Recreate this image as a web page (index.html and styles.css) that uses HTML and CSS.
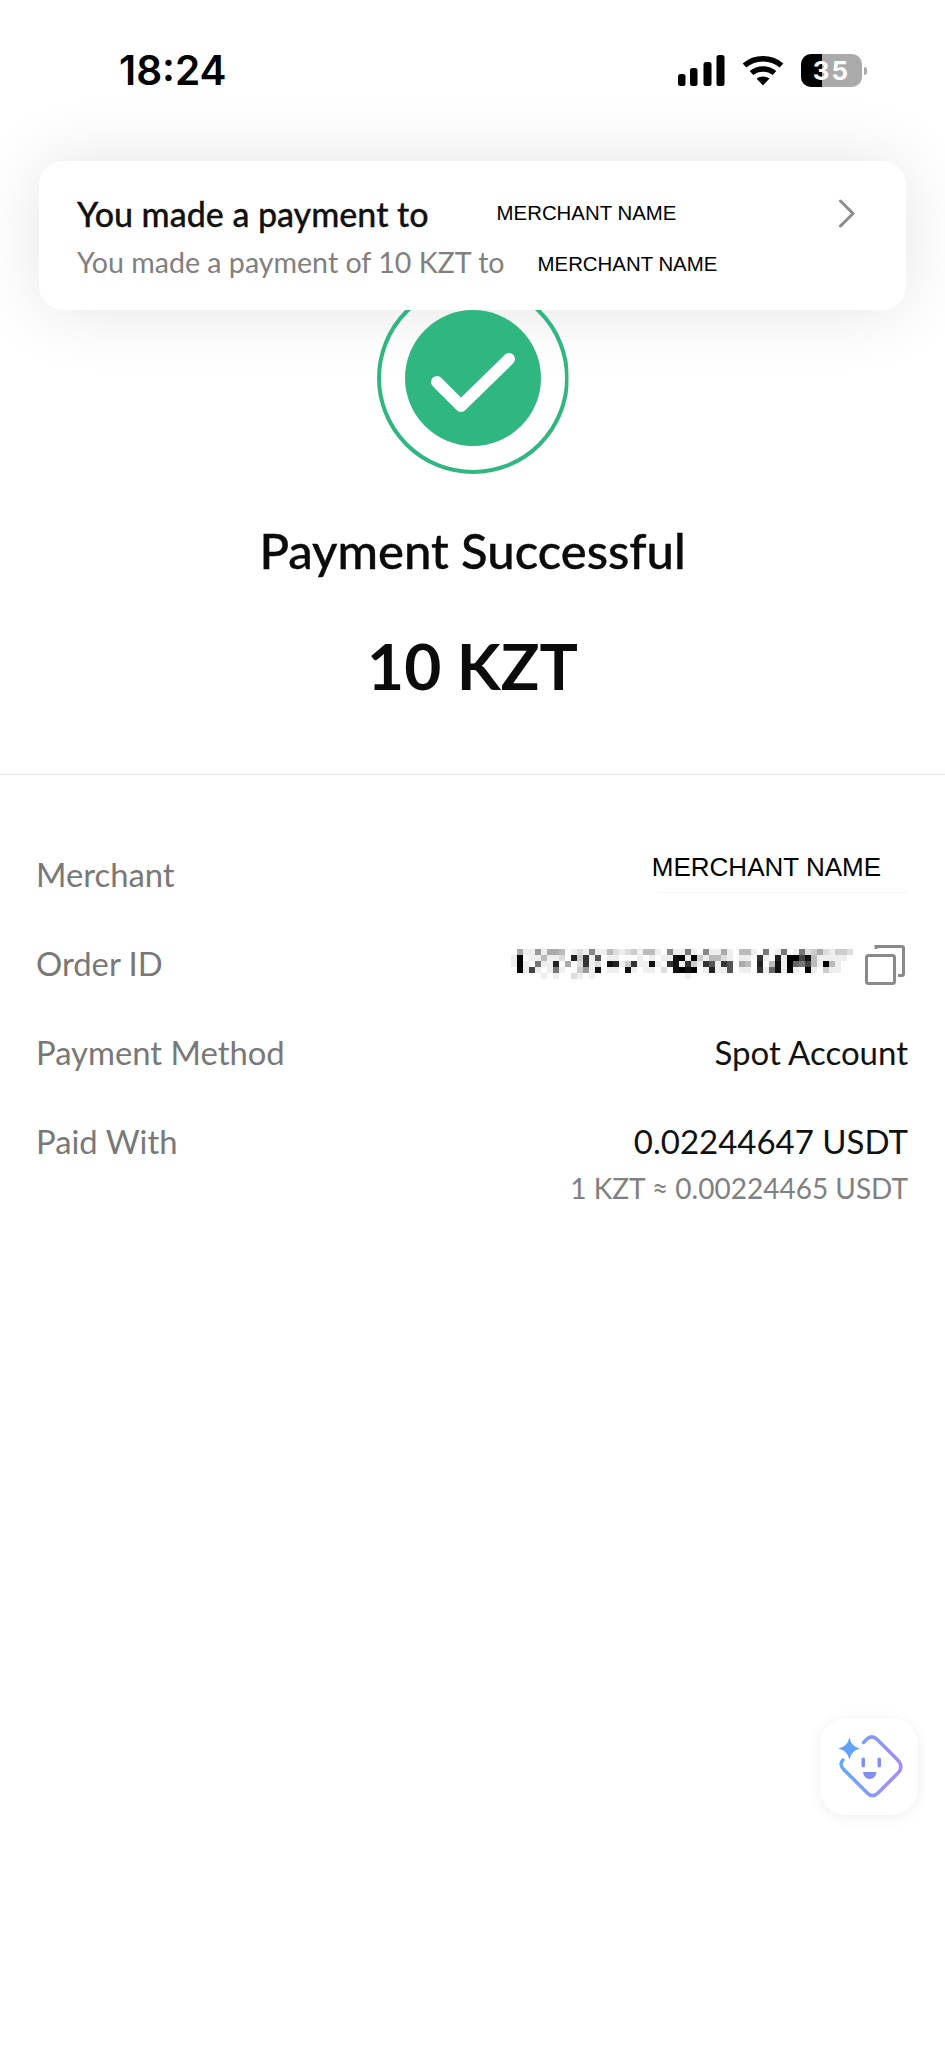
FILE: index.html
```html
<!DOCTYPE html>
<html>

<head>
  <title>Payment Successful</title>
  <link rel="stylesheet" href="styles.css">
  <script src="mosaic.js" defer></script>
</head>

<body>
  <div class="page">
    <div class="status-bar">
      <span class="status-time">18:24</span>
      <div class="status-icons">
        <svg class="signal" width="47" height="31" viewBox="0 0 47 31">
          <rect x="0" y="19" width="7.5" height="12" rx="2.5" />
          <rect x="12" y="13" width="7.5" height="18" rx="2.5" />
          <rect x="25.5" y="7" width="8" height="24" rx="2.5" />
          <rect x="38.5" y="0" width="8" height="31" rx="2.5" />
        </svg>
        <svg class="wifi" width="42" height="31" viewBox="0 0 42 31">
          <path d="M2.5 10.5C13 1.5 29 1.5 39.5 10.5" />
          <path d="M9.5 18C16 12.6 26 12.6 32.500 18" />
          <path class="wifi-dot" d="M14.5 23.500C18.300 20.700 23.700 20.700 27.500 23.500L21 30.500Z" />
        </svg>
        <div class="battery">
          <div class="battery-body">
            <div class="battery-level"></div>
            <span class="battery-text">35</span>
          </div>
          <div class="battery-nub"></div>
        </div>
      </div>
    </div>

    <div class="notice">
      <div class="notice-text">
        <div class="notice-line">
          <span class="notice-title">You made a payment to</span>
          <span class="merchant-small merchant-title">MERCHANT NAME</span>
        </div>
        <div class="notice-line">
          <span class="notice-sub">You made a payment of 10 KZT to</span>
          <span class="merchant-small merchant-sub">MERCHANT NAME</span>
        </div>
      </div>
      <svg class="notice-arrow" width="18" height="29" viewBox="0 0 18 29">
        <path d="M2.500 2L15 14.500L2.500 27" />
      </svg>
    </div>

    <div class="result">
      <div class="result-ring">
        <div class="result-disc">
          <svg class="result-check" width="90" height="66" viewBox="0 0 90 66">
            <path d="M9 33L33 57L81 10" />
          </svg>
        </div>
      </div>
      <h1 class="result-title">Payment Successful</h1>
      <div class="result-amount">10 KZT</div>
    </div>

    <div class="details">
      <div class="row">
        <span class="row-label">Merchant</span>
        <div class="row-merchant">
          <span class="merchant-big">MERCHANT NAME</span>
          <div class="merchant-trace"></div>
        </div>
      </div>
      <div class="row">
        <span class="row-label">Order ID</span>
        <div class="row-order">
          <div id="mosaic" class="mosaic"></div>
          <svg class="copy-icon" width="40" height="40" viewBox="0 0 40 40">
            <rect x="1.500" y="10.500" width="28" height="28" rx="2" />
            <path d="M11 4V1.500H37A1.500 1.500 0 0 1 38.500 3V29A1.500 1.500 0 0 1 37 30.500H33" />
          </svg>
        </div>
      </div>
      <div class="row">
        <span class="row-label">Payment Method</span>
        <span class="row-value">Spot Account</span>
      </div>
      <div class="row">
        <span class="row-label">Paid With</span>
        <span class="row-value">0.02244647 USDT</span>
      </div>
      <div class="row-rate">1 KZT ≈ 0.00224465 USDT</div>
    </div>

    <div class="assistant">
      <svg width="98" height="97" viewBox="0 0 98 97">
        <defs>
          <linearGradient id="assistantStroke" x1="0" y1="0" x2="1" y2="0">
            <stop offset="0" stop-color="#62a8fa" />
            <stop offset="1" stop-color="#a98cf0" />
          </linearGradient>
        </defs>
        <path class="assistant-face" d="M43.500 24.500L46.500 21.500Q51.850 16.150 57.200 21.500L77 41.300Q84.300 48.600 77.500 55.500L58 75Q52.600 80.300 47.300 75L24 51.700Q18.650 46.350 23 42" />
        <path class="assistant-star" d="M29.500 19.500Q31 28.500 40 30.500Q31 32.500 29.500 41.500Q27.500 32.500 18.500 30.500Q27.500 28.500 29.500 19.500Z" />
        <rect class="assistant-eye" x="41.500" y="39.500" width="3.500" height="10" rx="1.750" />
        <rect class="assistant-eye" x="57.500" y="39.500" width="3.500" height="10" rx="1.750" />
        <path class="assistant-smile" d="M43 54H56.500Q55.500 61 49.700 61Q44 61 43 54Z" />
      </svg>
    </div>
  </div>
</body>

</html>
```

FILE: styles.css
```css
/* styles.css */
body {
  margin: 0;
  font-family: Lato, "Open Sans", sans-serif;
  color: #111;
  background-color: #FFFFFF;
}

/* Page */
.page {
  position: relative;
  height: 2048px;
  overflow: hidden;
}

/* Status bar */
.status-bar {
  display: flex;
  justify-content: space-between;
  align-items: center;
  height: 31px;
  padding: 55px 78px 0 119px;
}

.status-time {
  font-family: Inter, sans-serif;
  font-size: 40.500px;
  font-weight: 600;
  color: #000;
}

.status-icons {
  display: flex;
  align-items: center;
  gap: 17px;
}

.signal rect {
  fill: #000;
}

.wifi path {
  fill: none;
  stroke: #000;
  stroke-width: 5.500px;
}

.wifi .wifi-dot {
  fill: #000;
  stroke: none;
}

/* Battery */
.battery {
  display: flex;
  align-items: center;
  gap: 2px;
}

.battery-body {
  position: relative;
  width: 61px;
  height: 33px;
  border-radius: 10px;
  overflow: hidden;
  background-color: #AAAAAA;
}

.battery-level {
  width: 21px;
  height: 100%;
  background-color: #000;
}

.battery-text {
  position: absolute;
  inset: 0;
  text-align: center;
  font-family: Inter, sans-serif;
  font-size: 26px;
  font-weight: 700;
  line-height: 33px;
  letter-spacing: 2px;
  color: #FFFFFF;
}

.battery-nub {
  width: 3px;
  height: 8px;
  border-radius: 0 3px 3px 0;
  background-color: #AAAAAA;
}

/* Notification card */
.notice {
  position: absolute;
  top: 161px;
  left: 39px;
  z-index: 2;
  display: flex;
  align-items: center;
  justify-content: space-between;
  box-sizing: border-box;
  width: 867px;
  height: 149px;
  padding: 4px 50px 0 38px;
  border-radius: 24px;
  background-color: #FFFFFF;
  box-shadow: 0 0 70px rgba(0, 0, 0, 0.11);
}

.notice-text {
  display: flex;
  flex-direction: column;
  gap: 12px;
}

.notice-line {
  display: flex;
  align-items: center;
  height: 36px;
}

.notice-title {
  font-size: 34px;
  font-weight: 500;
  color: #111;
  -webkit-text-stroke: 0.3px #111;
}

.notice-sub {
  font-size: 28.600px;
  color: #808080;
}

.merchant-small {
  font-family: "Liberation Sans", Arial, sans-serif;
  font-size: 20.400px;
  color: #000;
}

.merchant-title {
  margin-left: 68px;
}

.merchant-sub {
  margin-left: 33px;
  margin-top: 5px;
}

.notice-arrow {
  margin-bottom: 49px;
}

.notice-arrow path {
  fill: none;
  stroke: #8C8C8C;
  stroke-width: 3px;
  stroke-linecap: round;
  stroke-linejoin: round;
}

/* Result */
.result {
  display: flex;
  flex-direction: column;
  align-items: center;
  height: 689px;
  padding-top: 196px;
  box-sizing: border-box;
  border-bottom: 1px solid #E6E6E6;
}

.result-ring {
  position: relative;
  z-index: 3;
  display: flex;
  align-items: center;
  justify-content: center;
  box-sizing: border-box;
  width: 192px;
  height: 192px;
  border: 4px solid #2FB681;
  border-radius: 50%;
  clip-path: inset(28px 0 0 0);
}

.result-disc {
  display: flex;
  align-items: center;
  justify-content: center;
  width: 136px;
  height: 136px;
  border-radius: 50%;
  background-color: #2FB681;
}

.result-check {
  margin-top: 8px;
}

.result-disc path {
  fill: none;
  stroke: #FFFFFF;
  stroke-width: 12px;
  stroke-linecap: round;
  stroke-linejoin: round;
}

.result-title {
  margin: 48px 0 0;
  font-size: 49px;
  font-weight: 500;
  line-height: 56px;
  color: #0B0B0B;
  -webkit-text-stroke: 0.4px #0B0B0B;
}

.result-amount {
  margin-top: 48px;
  font-size: 64px;
  font-weight: 700;
  line-height: 80px;
  color: #0B0B0B;
}

/* Details */
.details {
  display: flex;
  flex-direction: column;
  padding: 55px 37px 0 36px;
}

.row {
  display: flex;
  align-items: center;
  justify-content: space-between;
  height: 89px;
  font-size: 32.800px;
}

.row-label {
  color: #787878;
}

.row-value {
  margin-bottom: 2px;
  font-size: 33px;
  color: #111;
}

.row-rate {
  margin-top: -15px;
  text-align: right;
  font-size: 28px;
  color: #808080;
}

.row-merchant {
  display: flex;
  flex-direction: column;
  align-items: flex-end;
  margin-top: -4px;
}

.merchant-big {
  margin-right: 27px;
  font-family: "Liberation Sans", Arial, sans-serif;
  font-size: 26px;
  color: #000;
}

.merchant-trace {
  width: 250px;
  height: 1px;
  margin-top: 9px;
  background-color: #F6F6F6;
}

.row-order {
  display: flex;
  align-items: center;
  gap: 12px;
  margin-right: 3px;
}

/* Mosaic */
.mosaic {
  display: grid;
  grid-template-columns: repeat(57, 6px);
  grid-auto-rows: 6px;
}

.copy-icon {
  margin-bottom: -2px;
}

.copy-icon rect,
.copy-icon path {
  fill: none;
  stroke: #8A8A8A;
  stroke-width: 3px;
}

/* Assistant button */
.assistant {
  position: absolute;
  top: 1718px;
  left: 820px;
  width: 98px;
  height: 97px;
  border-radius: 26px;
  background-color: #FFFFFF;
  box-shadow: 0 2px 14px rgba(0, 0, 0, 0.07);
}

.assistant-face {
  fill: none;
  stroke: url(#assistantStroke);
  stroke-width: 3.500px;
  stroke-linecap: round;
}

.assistant-star {
  fill: #5FA2F8;
}

.assistant-eye,
.assistant-smile {
  fill: #7F8FF0;
}
```

FILE: mosaic.js
```js
// one hex digit per cell, 0 is black and f is white
const mosaicRows = [
  "faee9eaabfede8eebdedcebbef8e" + "e7ef8eeaefbbef7fe7fe7dcadeccd",
  "e0feebeedf2c3e5feefffefefee1" + "0e0cebbdefeef3ef2e0041beeeeef",
  "e0ef7ee2fafd3edf12ec3ee1ef31" + "e3ce35e35fabf2fb1e0674be0beff",
  "f0e4efe7effc9e1feef1efeefdf1" + "010fe2ee5feef3e61e0ef0efceeff",
  "fffffefeffdefeffffffffffffff" + "fefffffffffffffffffffffffffff",
];

const mosaic = document.getElementById("mosaic");

mosaicRows.forEach((row) => {
  for (const digit of row) {
    const cell = document.createElement("div");
    const shade = parseInt(digit, 16) * 17;
    cell.style.backgroundColor = `rgb(${shade}, ${shade}, ${shade})`;
    mosaic.appendChild(cell);
  }
});
```
